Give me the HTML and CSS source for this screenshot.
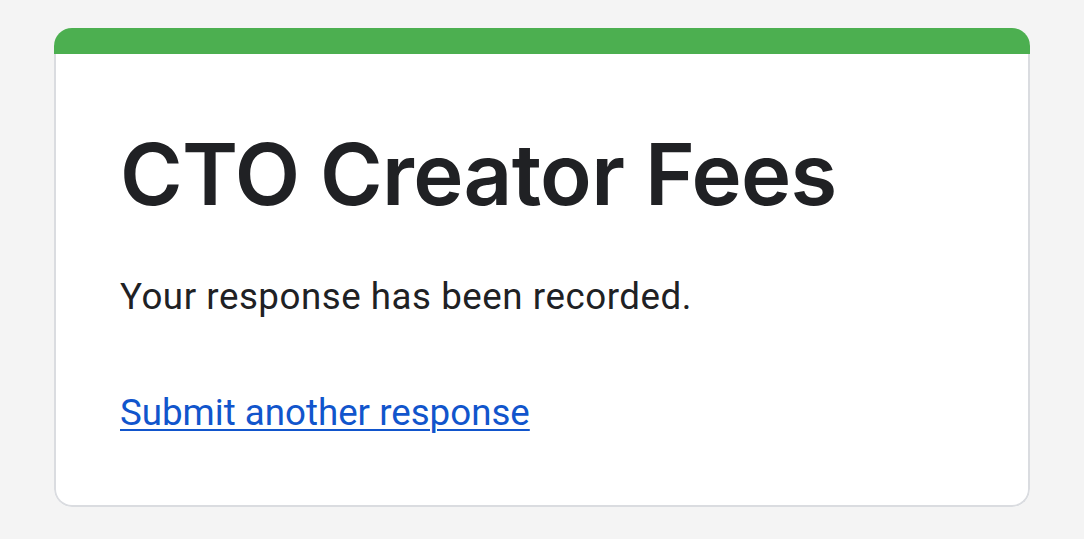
FILE: index.html
```html
<!DOCTYPE html>
<html>
<head>
<meta charset="utf-8">
<link rel="stylesheet" href="styles.css">
</head>
<body>
<div class="card">
  <div class="card-accent"></div>
  <div class="card-body">
    <h1 class="title">CTO Creator Fees</h1>
    <p class="message">Your response has been recorded.</p>
    <a class="link" href="#">Submit another response</a>
  </div>
</div>
</body>
</html>
```
FILE: styles.css
```css
html, body {
  margin: 0;
  padding: 0;
  background: #f4f4f4;
}
body {
  padding: 28px 54px;
  font-family: Roboto, "Liberation Sans", sans-serif;
  color: #202124;
}
.card {
  background: #fff;
  border-radius: 18px;
  overflow: hidden;
}
.card-accent {
  height: 26px;
  background: #4caf50;
}
.card-body {
  border: 2px solid #dadce0;
  border-top: none;
  border-radius: 0 0 18px 18px;
  padding: 70px 64px 66px 64px;
  display: flex;
  flex-direction: column;
  align-items: flex-start;
}
.title {
  margin: 0;
  font-family: Inter, Roboto, sans-serif;
  font-weight: 600;
  font-size: 85px;
  line-height: 1.2;
  color: #202124;
  letter-spacing: -0.7px;
}
.message {
  margin: 45px 0 0 0;
  font-size: 36.7px;
  line-height: 1.4;
  letter-spacing: 0.54px;
  color: #202124;
}
.link {
  margin-top: 65px;
  font-size: 36.7px;
  line-height: 1.4;
  color: #1155cc;
  text-decoration: underline;
  text-underline-offset: 4px;
  text-decoration-thickness: 2px;
}
```
